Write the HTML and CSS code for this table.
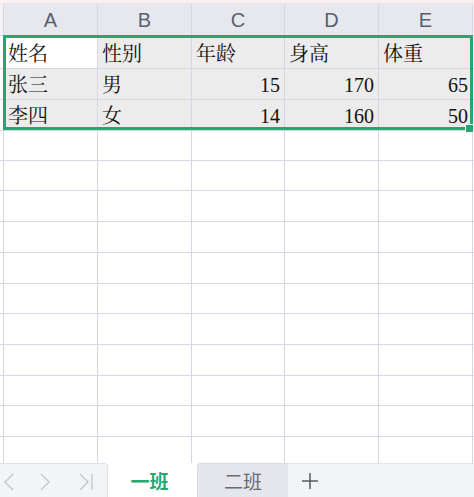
FILE: index.html
```html
<!DOCTYPE html>
<html lang="zh-CN">
<head>
<meta charset="utf-8">
<title>Sheet</title>
<link rel="stylesheet" href="styles.css">
</head>
<body>
<div class="sheet">
  <div class="topband"></div>
  <div class="grid-wrap">
    <div class="grid">
      <div class="st hs"></div><div class="hd">A</div><div class="hd">B</div><div class="hd">C</div><div class="hd">D</div><div class="hd">E</div><div class="st hs"></div>

      <div class="st"></div><div class="c act">姓名</div><div class="c sel">性别</div><div class="c sel">年龄</div><div class="c sel">身高</div><div class="c sel">体重</div><div class="st"></div>
      <div class="st"></div><div class="c sel">张三</div><div class="c sel">男</div><div class="c sel num">15</div><div class="c sel num">170</div><div class="c sel num">65</div><div class="st"></div>
      <div class="st"></div><div class="c sel">李四</div><div class="c sel">女</div><div class="c sel num">14</div><div class="c sel num">160</div><div class="c sel num">50</div><div class="st"></div>

      <div class="st"></div><div class="c"></div><div class="c"></div><div class="c"></div><div class="c"></div><div class="c"></div><div class="st"></div>
      <div class="st"></div><div class="c"></div><div class="c"></div><div class="c"></div><div class="c"></div><div class="c"></div><div class="st"></div>
      <div class="st"></div><div class="c"></div><div class="c"></div><div class="c"></div><div class="c"></div><div class="c"></div><div class="st"></div>
      <div class="st"></div><div class="c"></div><div class="c"></div><div class="c"></div><div class="c"></div><div class="c"></div><div class="st"></div>
      <div class="st"></div><div class="c"></div><div class="c"></div><div class="c"></div><div class="c"></div><div class="c"></div><div class="st"></div>
      <div class="st"></div><div class="c"></div><div class="c"></div><div class="c"></div><div class="c"></div><div class="c"></div><div class="st"></div>
      <div class="st"></div><div class="c"></div><div class="c"></div><div class="c"></div><div class="c"></div><div class="c"></div><div class="st"></div>
      <div class="st"></div><div class="c"></div><div class="c"></div><div class="c"></div><div class="c"></div><div class="c"></div><div class="st"></div>
      <div class="st"></div><div class="c"></div><div class="c"></div><div class="c"></div><div class="c"></div><div class="c"></div><div class="st"></div>
      <div class="st"></div><div class="c"></div><div class="c"></div><div class="c"></div><div class="c"></div><div class="c"></div><div class="st"></div>
      <div class="st"></div><div class="c"></div><div class="c"></div><div class="c"></div><div class="c"></div><div class="c"></div><div class="st"></div>
    </div>
    <div class="selection"><div class="handle"></div></div>
  </div>
  <div class="tabbar">
    <div class="nav">
      <svg class="arrow" width="12" height="18" viewBox="0 0 12 18"><polyline points="10,1 2,9 10,17" fill="none" stroke="#c3c6cd" stroke-width="1.4"/></svg>
      <svg class="arrow" width="12" height="18" viewBox="0 0 12 18"><polyline points="2,1 10,9 2,17" fill="none" stroke="#c3c6cd" stroke-width="1.4"/></svg>
      <svg class="arrow" width="16" height="18" viewBox="0 0 16 18"><polyline points="2,1 10,9 2,17" fill="none" stroke="#c3c6cd" stroke-width="1.4"/><line x1="14" y1="1" x2="14" y2="17" stroke="#c3c6cd" stroke-width="1.4"/></svg>
    </div>
    <div class="tab active">一班</div>
    <div class="tab other">二班</div>
    <div class="rest">
      <svg class="plus" width="16" height="16" viewBox="0 0 16 16"><line x1="8" y1="0" x2="8" y2="16" stroke="#555a62" stroke-width="1.5"/><line x1="0" y1="8" x2="16" y2="8" stroke="#555a62" stroke-width="1.5"/></svg>
    </div>
  </div>
</div>
</body>
</html>
```

FILE: styles.css
```css
html, body {
  margin: 0;
  padding: 0;
  background: #ffffff;
}
.sheet {
  width: 474px;
  height: 497px;
  display: flex;
  flex-direction: column;
  overflow: hidden;
  font-family: "Liberation Serif", "Noto Serif CJK SC", "Noto Sans CJK SC", serif;
}
.topband {
  height: 3px;
  flex: none;
  background: #fbf0f0;
}
.grid-wrap {
  position: relative;
  flex: 1;
  overflow: hidden;
}
.grid {
  display: grid;
  grid-template-columns: 3px 93px 93px 92px 93px 93px 1px;
  grid-template-rows: 32px 32px 30px 30px 29px 29px 30px 30px 30px 29px 30px 30px 29px 30px 30px;
  gap: 1px;
  background: #d5d8e4;
}
.st {
  background: #ffffff;
}
.hs {
  background: #f2f2f5;
}
.hd {
  background: #e6e8ed;
  display: flex;
  align-items: center;
  justify-content: center;
  font-family: "Liberation Sans", Arial, sans-serif;
  font-size: 20px;
  color: #5a5f6d;
  padding-top: 3px;
}
.c {
  background: #ffffff;
  display: flex;
  align-items: flex-end;
  padding: 0 4px 2px 4px;
  font-size: 20px;
  line-height: 24px;
  color: #111111;
  overflow: hidden;
  white-space: nowrap;
}
.c.sel {
  background: #ececec;
}
.c.act {
  background: #ffffff;
}
.c.num {
  justify-content: flex-end;
}
.selection {
  position: absolute;
  left: 3px;
  top: 32px;
  width: 470px;
  height: 95px;
  box-sizing: border-box;
  border: 3px solid #24a86f;
  pointer-events: none;
}
.handle {
  position: absolute;
  right: -4px;
  bottom: -6px;
  width: 7px;
  height: 7px;
  background: #24a86f;
  border: 1px solid #ffffff;
}
.tabbar {
  flex: none;
  height: 34px;
  display: flex;
  font-family: "Noto Sans CJK SC", sans-serif;
  font-size: 19px;
}
.nav {
  width: 108px;
  box-sizing: border-box;
  background: #f3f4f6;
  border-top: 1px solid #dfe0e4;
  border-right: 1px solid #dfe0e4;
  border-top-right-radius: 4px;
  display: flex;
  align-items: center;
  padding: 2px 0 0 2px;
}
.nav .arrow {
  flex: none;
}
.nav .arrow:nth-child(1) { margin-left: 1px; }
.nav .arrow:nth-child(2) { margin-left: 24px; }
.nav .arrow:nth-child(3) { margin-left: 27px; }
.tab {
  display: flex;
  align-items: center;
  justify-content: center;
  box-sizing: border-box;
}
.tab.active {
  width: 89px;
  background: #ffffff;
  color: #24a86f;
  font-weight: 700;
  padding-right: 6px;
}
.tab.other {
  width: 91px;
  background: #e4e6eb;
  color: #676b76;
  border-top: 1px solid #d9dbe1;
  border-left: 1px solid #d9dbe1;
  border-top-left-radius: 4px;
}
.rest {
  flex: 1;
  background: #f3f4f6;
  border-top: 1px solid #e3e4e8;
  display: flex;
  align-items: center;
  padding-left: 14px;
  padding-top: 1px;
}
.plus {
  flex: none;
}
```
